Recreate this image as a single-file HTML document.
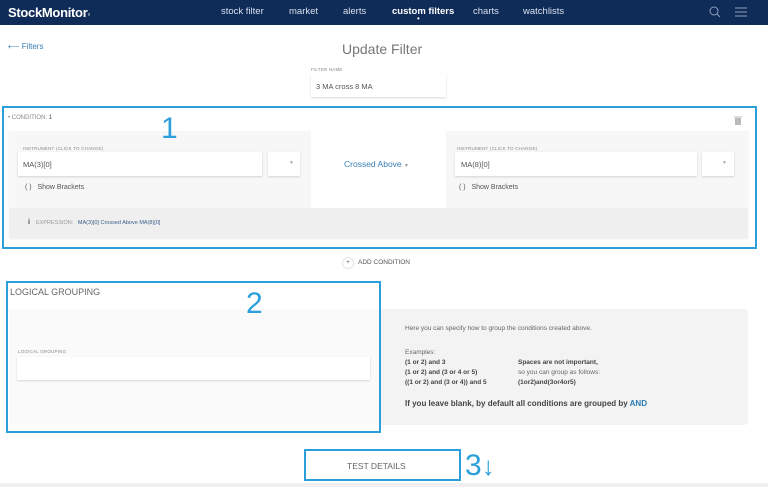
<!DOCTYPE html>
<html><head><meta charset="utf-8"><style>
*{margin:0;padding:0;box-sizing:border-box}
body{width:768px;height:487px;background:#fff;font-family:"Liberation Sans",sans-serif;position:relative;overflow:hidden;color:#555}
.a{position:absolute;white-space:nowrap}
.nav{position:absolute;left:0;top:0;width:768px;height:25px;background:#0f2b57}
.nav .a{color:#d8e0ee;font-size:9.5px;top:6px}
.lbl{font-size:4.5px;color:#888;letter-spacing:.2px}
.inp{position:absolute;background:#fff;box-shadow:0 1px 2px rgba(0,0,0,.15)}
.blue{border:2px solid #2b9fdc;position:absolute;z-index:5}
.big{position:absolute;color:#2b9fdc;font-size:30px;line-height:1;z-index:6}
</style></head><body>
<div class="nav">
<div class="a" style="left:8px;top:5px;font-size:13px;color:#fff;font-weight:bold;letter-spacing:-.3px">StockMonitor<span style="font-size:8px">▫</span></div>
<div class="a" style="left:221px">stock filter</div>
<div class="a" style="left:289px">market</div>
<div class="a" style="left:343px">alerts</div>
<div class="a" style="left:392px;color:#fff;font-weight:bold">custom filters</div>
<div class="a" style="left:417px;top:14px;font-size:8px;color:#fff">•</div>
<div class="a" style="left:473px">charts</div>
<div class="a" style="left:523px">watchlists</div>
<svg class="a" style="left:708px;top:5px" width="14" height="14"><circle cx="6" cy="6" r="4" fill="none" stroke="#8fa0bd" stroke-width="1"/><line x1="9" y1="9" x2="12" y2="12" stroke="#8fa0bd"/></svg>
<svg class="a" style="left:734px;top:6px" width="14" height="12"><path d="M1 2H13M1 6H13M1 10H13" stroke="#8fa0bd" stroke-width="1"/></svg>
</div>
<div class="a" style="left:8px;top:42px;font-size:8px;color:#3a7fb5">⟵ Filters</div>
<div class="a" style="left:342px;top:41px;font-size:14px;color:#777">Update Filter</div>
<div class="a lbl" style="left:311px;top:67px">FILTER NAME</div>
<div class="inp" style="left:311px;top:74px;width:135px;height:23px"></div>
<div class="a" style="left:316px;top:82px;font-size:7.5px;color:#555">3 MA cross 8 MA</div>

<div class="blue" style="left:2px;top:106px;width:755px;height:143px"></div>
<div class="a" style="left:8px;top:115px;font-size:6px;color:#888">• CONDITION: <span style="color:#444">1</span></div>
<div class="big" style="left:161px;top:114px">1</div>
<svg class="a" style="left:734px;top:116px" width="8" height="9"><rect x="1" y="2" width="6" height="7" fill="#bbb"/><rect x="0" y="0.5" width="8" height="1" fill="#bbb"/></svg>
<div class="a" style="left:9px;top:131px;width:739px;height:107px;background:#f7f7f7;box-shadow:0 1px 2px rgba(0,0,0,.08)"></div>
<div class="a" style="left:311px;top:131px;width:135px;height:77px;background:#fff"></div>
<div class="a" style="left:9px;top:208px;width:739px;height:30px;background:#efefef"></div>
<div class="a lbl" style="left:23px;top:146px">INSTRUMENT (CLICK TO CHANGE)</div>
<div class="inp" style="left:18px;top:152px;width:244px;height:24px"></div>
<div class="a" style="left:23px;top:160px;font-size:7.5px">MA(3)[0]</div>
<div class="inp" style="left:268px;top:152px;width:32px;height:24px"></div>
<div class="a" style="left:289px;top:160px;font-size:5px;color:#aaa">▼</div>
<div class="a" style="left:25px;top:184px;font-size:7px;color:#555">( )&nbsp;&nbsp; Show Brackets</div>
<div class="a" style="left:344px;top:159px;font-size:8.5px;color:#3a7fb5">Crossed Above <span style="font-size:5px;color:#999">▼</span></div>
<div class="a lbl" style="left:457px;top:146px">INSTRUMENT (CLICK TO CHANGE)</div>
<div class="inp" style="left:455px;top:152px;width:242px;height:24px"></div>
<div class="a" style="left:461px;top:160px;font-size:7.5px">MA(8)[0]</div>
<div class="inp" style="left:702px;top:152px;width:32px;height:24px"></div>
<div class="a" style="left:722px;top:160px;font-size:5px;color:#aaa">▼</div>
<div class="a" style="left:459px;top:184px;font-size:7px;color:#555">( )&nbsp;&nbsp; Show Brackets</div>
<div class="a" style="left:28px;top:219px;font-size:7px;color:#444;font-weight:bold">i</div>
<div class="a" style="left:36px;top:220px;font-size:5.5px;color:#999">EXPRESSION:&nbsp;&nbsp; <span style="color:#3a5f8a">MA(3)[0] Crossed Above MA(8)[0]</span></div>

<div class="a" style="left:343px;top:258px;width:10px;height:10px;border-radius:50%;background:#fff;box-shadow:0 0 2px rgba(0,0,0,.3);font-size:6px;text-align:center;line-height:10px">+</div>
<div class="a" style="left:358px;top:259px;font-size:6.5px;color:#555">ADD CONDITION</div>

<div class="a" style="left:9px;top:309px;width:739px;height:116px;background:#f3f3f3;border-radius:4px"></div>
<div class="a" style="left:9px;top:309px;width:371px;height:116px;background:#fafafa"></div>
<div class="blue" style="left:6px;top:281px;width:375px;height:152px"></div>
<div class="a" style="left:10px;top:287px;font-size:9px;color:#666">LOGICAL GROUPING</div>
<div class="big" style="left:246px;top:289px">2</div>
<div class="a lbl" style="left:18px;top:349px">LOGICAL GROUPING</div>
<div class="inp" style="left:17px;top:357px;width:353px;height:23px"></div>
<div class="a" style="left:405px;top:325px;font-size:6.5px;color:#666">Here you can specify how to group the conditions created above.</div>
<div class="a" style="left:405px;top:348px;font-size:6.5px;color:#666;line-height:10px">Examples:<br><b style="color:#444">(1 or 2) and 3<br>(1 or 2) and (3 or 4 or 5)<br>((1 or 2) and (3 or 4)) and 5</b></div>
<div class="a" style="left:518px;top:358px;font-size:6.5px;color:#666;line-height:10px"><b style="color:#444">Spaces are not important,</b><br>so you can group as follows:<br><b style="color:#444">(1or2)and(3or4or5)</b></div>
<div class="a" style="left:405px;top:399px;font-size:8px;color:#444;font-weight:bold">If you leave blank, by default all conditions are grouped by <span style="color:#2a7ab5">AND</span></div>

<div class="blue" style="left:304px;top:449px;width:157px;height:32px"></div>
<div class="a" style="left:347px;top:461px;font-size:8.5px;color:#666">TEST DETAILS</div>
<div class="big" style="left:465px;top:451px">3<span style="font-size:26px">↓</span></div>
<div class="a" style="left:0;top:483px;width:768px;height:4px;background:#f0f0f0"></div>
</body></html>
